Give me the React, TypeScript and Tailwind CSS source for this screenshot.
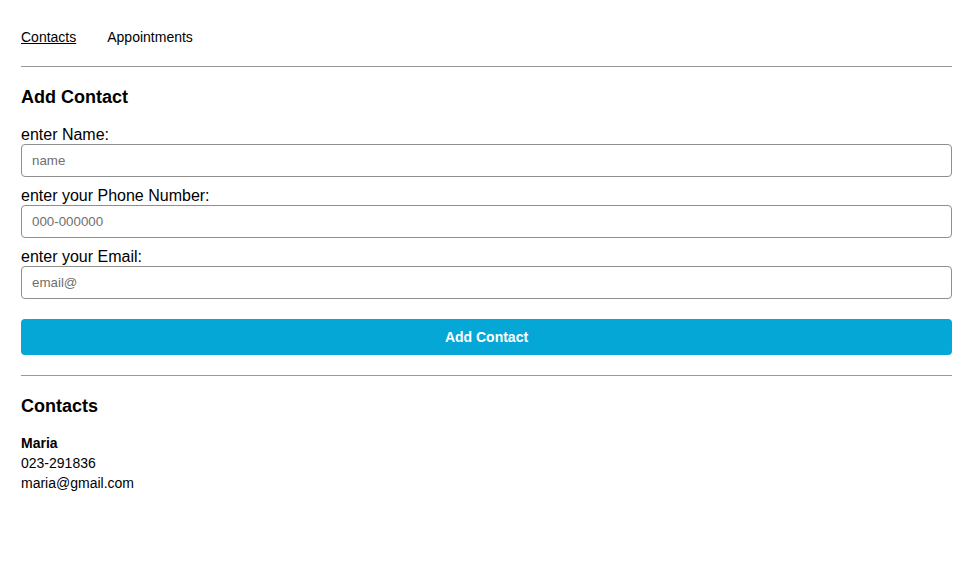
export default function App() {
  return (
    <div className="min-h-[585px] bg-white pl-[21px] pr-[17px] font-['Liberation_Sans',Arial,sans-serif] text-black">
      <nav className="flex gap-[31px] pt-[29px] text-[14px] leading-4">
        <a className="underline">Contacts</a>
        <a>Appointments</a>
      </nav>
      <hr className="mt-[21px] border-t border-[#999999]" />
      <AddContactForm />
      <hr className="mt-[20px] border-t border-[#999999]" />
      <ContactList />
    </div>
  );
}

function AddContactForm() {
  return (
    <form onSubmit={(e) => e.preventDefault()}>
      <h2 className="mt-[19px] text-[18px] font-bold leading-[22px]">Add Contact</h2>
      <div className="mt-[17px] flex flex-col">
        <Field label="enter Name:" placeholder="name" />
        <div className="h-[9px]" />
        <Field label="enter your Phone Number:" placeholder="000-000000" />
        <div className="h-[9px]" />
        <Field label="enter your Email:" placeholder="email@" />
      </div>
      <button className="mt-[20px] h-[36px] w-full rounded-[4px] bg-[#05a7d7] text-[14px] font-bold text-white">
        Add Contact
      </button>
    </form>
  );
}

function Field({ label, placeholder }: { label: string; placeholder: string }) {
  return (
    <label className="flex flex-col">
      <span className="text-[16px] leading-[19px]">{label}</span>
      <input
        className="h-[33px] w-full rounded-[4px] border border-[#8f8f8f] px-[10px] text-[13.33px] outline-none placeholder:text-[#6f6f6f]"
        placeholder={placeholder}
      />
    </label>
  );
}

function ContactList() {
  return (
    <div>
      <h2 className="mt-[19px] text-[18px] font-bold leading-[22px]">Contacts</h2>
      <div className="mt-[16px] text-[14px] leading-[20px]">
        <p className="font-bold">Maria</p>
        <p>023-291836</p>
        <p>maria@gmail.com</p>
      </div>
    </div>
  );
}
